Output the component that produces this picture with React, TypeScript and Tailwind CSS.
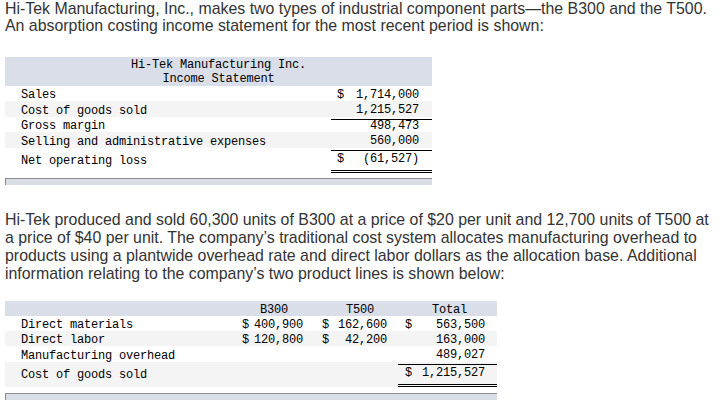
import React from 'react';

const prose = { fontFamily: "'Liberation Sans', Arial, sans-serif" };
const mono = { fontFamily: "'Liberation Mono', 'DejaVu Sans Mono', monospace" };

function Money({ sign, value }: { sign?: boolean; value: string }) {
  return (
    <div className="flex w-full justify-between">
      <span>{sign ? '$' : ''}</span>
      <span>{value}</span>
    </div>
  );
}

function IncomeStatement() {
  const rows = [
    { label: 'Sales', value: '1,714,000', sign: true, shade: false, line: false },
    { label: 'Cost of goods sold', value: '1,215,527', sign: false, shade: true, line: true },
    { label: 'Gross margin', value: '498,473', sign: false, shade: false, line: false },
    { label: 'Selling and administrative expenses', value: '560,000', sign: false, shade: true, line: true },
  ];

  return (
    <div className="mt-[23px] w-[427px] text-[12px] tracking-[-0.2px] text-black" style={mono}>
      <div className="flex h-[29px] flex-col items-center justify-center bg-[#d9dee8] leading-[14px]">
        <div>Hi-Tek Manufacturing Inc.</div>
        <div>Income Statement</div>
      </div>
      {rows.map((r) => (
        <div
          key={r.label}
          className={`grid grid-cols-[326px_101px] ${r.line ? 'h-[16px]' : 'h-[15px]'} ${r.shade ? 'bg-[#f4f4f4]' : 'bg-white'}`}
        >
          <div className="flex items-center pl-[16px]">{r.label}</div>
          <div className={`flex items-center pl-[6px] pr-[13px] ${r.line ? 'border-b border-black' : ''}`}>
            <Money sign={r.sign} value={r.value} />
          </div>
        </div>
      ))}
      <div className="grid h-[25px] grid-cols-[326px_101px]">
        <div className="flex items-center pl-[16px]">Net operating loss</div>
        <div className="flex items-center border-b-[3px] border-double border-black pl-[6px] pr-[13px]">
          <Money sign value="(61,527)" />
        </div>
      </div>
      <div className="mt-[5px] h-[7px] border-l border-t border-[#8c8c8c] bg-[#d9dde6]" />
    </div>
  );
}

function CostTable() {
  const rows = [
    { label: 'Direct materials', b: '400,900', t: '162,600', total: '563,500', sign: true, shade: false, line: false },
    { label: 'Direct labor', b: '120,800', t: '42,200', total: '163,000', sign: false, shade: true, line: false },
    { label: 'Manufacturing overhead', b: '', t: '', total: '489,027', sign: false, shade: false, line: true },
  ];

  return (
    <div className="mt-[18px] w-[492px] text-[12px] tracking-[-0.2px] text-black" style={mono}>
      <div className="grid h-[15px] grid-cols-[231px_76px_86px_99px] items-center bg-[#d9dee8]">
        <div />
        <div className="text-center">B300</div>
        <div className="pl-[10px] text-center">T500</div>
        <div className="pl-[4px] text-center">Total</div>
      </div>
      {rows.map((r) => (
        <div
          key={r.label}
          className={`grid grid-cols-[231px_76px_86px_99px] ${r.line ? 'h-[16px]' : 'h-[15px]'} ${r.shade ? 'bg-[#f4f4f4]' : 'bg-white'}`}
        >
          <div className="flex items-center pl-[16px]">{r.label}</div>
          <div className="flex items-center pl-[6px] pr-[9px]">
            {r.b && <Money sign value={r.b} />}
          </div>
          <div className="flex items-center pl-[10px] pr-[11px]">
            {r.t && <Money sign value={r.t} />}
          </div>
          <div className={`flex items-center pl-[7px] pr-[12px] ${r.line ? 'border-b border-black' : ''}`}>
            <Money sign={r.sign} value={r.total} />
          </div>
        </div>
      ))}
      <div className="grid h-[25px] grid-cols-[231px_76px_86px_99px] bg-[#f4f4f4]">
        <div className="flex items-center pl-[16px]">Cost of goods sold</div>
        <div />
        <div />
        <div className="flex items-center border-b-[3px] border-double border-black pl-[7px] pr-[12px]">
          <Money sign value="1,215,527" />
        </div>
      </div>
      <div className="mt-[6px] h-[7px] border-l border-t border-[#8c8c8c] bg-[#d9dde6]" />
    </div>
  );
}

export default function App() {
  return (
    <div className="h-[412px] w-[720px] overflow-hidden bg-white pl-[5px] text-[#333]">
      <p className="whitespace-nowrap text-[15.9px] leading-[17px]" style={prose}>
        Hi-Tek Manufacturing, Inc., makes two types of industrial component parts—the B300 and the T500.
        <br />
        An absorption costing income statement for the most recent period is shown:
      </p>
      <IncomeStatement />
      <p className="mt-[26px] whitespace-nowrap text-[15.9px] leading-[18px]" style={prose}>
        Hi-Tek produced and sold 60,300 units of B300 at a price of $20 per unit and 12,700 units of T500 at
        <br />
        a price of $40 per unit. The company’s traditional cost system allocates manufacturing overhead to
        <br />
        products using a plantwide overhead rate and direct labor dollars as the allocation base. Additional
        <br />
        information relating to the company’s two product lines is shown below:
      </p>
      <CostTable />
    </div>
  );
}
